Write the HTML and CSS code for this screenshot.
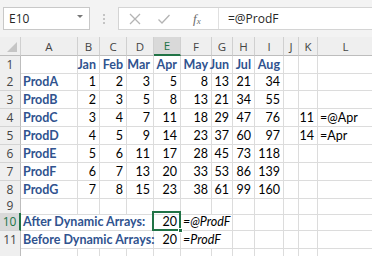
FILE: index.html
```html
<!DOCTYPE html>
<html>
<head>
    <meta charset="UTF-8">
    <title>Dynamic Arrays</title>
    <link rel="stylesheet" href="styles.css">
</head>
<body>
    <div class="toolbar">
        <div class="namebox">
            <span>E10</span>
            <span class="caret"></span>
        </div>
        <div class="grip"><i></i><i></i><i></i></div>
        <div class="formula">
            <div class="btns">
                <svg class="icon" width="14" height="14" viewBox="0 0 14 14"><path d="M2 2 L12 12 M12 2 L2 12" stroke="#b4b4b4" stroke-width="1.3" fill="none"/></svg>
                <svg class="icon" width="14" height="14" viewBox="0 0 14 14"><path d="M1.5 7.5 L5 11 L12.5 3" stroke="#b4b4b4" stroke-width="1.3" fill="none"/></svg>
                <span class="fx">f<sub>x</sub></span>
            </div>
            <div class="input">=@ProdF</div>
        </div>
    </div>

    <div class="sheet">
        <div class="row head">
            <div class="corner"><span></span></div>
            <div class="ch">A</div><div class="ch">B</div><div class="ch">C</div><div class="ch">D</div>
            <div class="ch sel">E</div><div class="ch">F</div><div class="ch">G</div><div class="ch">H</div>
            <div class="ch">I</div><div class="ch">J</div><div class="ch">K</div><div class="ch">L</div>
        </div>

        <div class="row h17">
            <div class="rh">1</div><div class="c"></div>
            <div class="c b r">Jan</div><div class="c b r">Feb</div><div class="c b r">Mar</div><div class="c b r">Apr</div>
            <div class="c b r">May</div><div class="c b r">Jun</div><div class="c b r">Jul</div><div class="c b r">Aug</div>
            <div class="c"></div><div class="c"></div><div class="c"></div>
        </div>
        <div class="row">
            <div class="rh">2</div><div class="c b">ProdA</div>
            <div class="c r">1</div><div class="c r">2</div><div class="c r">3</div><div class="c r">5</div>
            <div class="c r">8</div><div class="c r">13</div><div class="c r">21</div><div class="c r">34</div>
            <div class="c"></div><div class="c"></div><div class="c"></div>
        </div>
        <div class="row">
            <div class="rh">3</div><div class="c b">ProdB</div>
            <div class="c r">2</div><div class="c r">3</div><div class="c r">5</div><div class="c r">8</div>
            <div class="c r">13</div><div class="c r">21</div><div class="c r">34</div><div class="c r">55</div>
            <div class="c"></div><div class="c"></div><div class="c"></div>
        </div>
        <div class="row">
            <div class="rh">4</div><div class="c b">ProdC</div>
            <div class="c r">3</div><div class="c r">4</div><div class="c r">7</div><div class="c r">11</div>
            <div class="c r">18</div><div class="c r">29</div><div class="c r">47</div><div class="c r">76</div>
            <div class="c"></div><div class="c r">11</div><div class="c">=@Apr</div>
        </div>
        <div class="row">
            <div class="rh">5</div><div class="c b">ProdD</div>
            <div class="c r">4</div><div class="c r">5</div><div class="c r">9</div><div class="c r">14</div>
            <div class="c r">23</div><div class="c r">37</div><div class="c r">60</div><div class="c r">97</div>
            <div class="c"></div><div class="c r">14</div><div class="c">=Apr</div>
        </div>
        <div class="row">
            <div class="rh">6</div><div class="c b">ProdE</div>
            <div class="c r">5</div><div class="c r">6</div><div class="c r">11</div><div class="c r">17</div>
            <div class="c r">28</div><div class="c r">45</div><div class="c r">73</div><div class="c r">118</div>
            <div class="c"></div><div class="c"></div><div class="c"></div>
        </div>
        <div class="row">
            <div class="rh">7</div><div class="c b">ProdF</div>
            <div class="c r">6</div><div class="c r">7</div><div class="c r">13</div><div class="c r">20</div>
            <div class="c r">33</div><div class="c r">53</div><div class="c r">86</div><div class="c r">139</div>
            <div class="c"></div><div class="c"></div><div class="c"></div>
        </div>
        <div class="row h16">
            <div class="rh">8</div><div class="c b">ProdG</div>
            <div class="c r">7</div><div class="c r">8</div><div class="c r">15</div><div class="c r">23</div>
            <div class="c r">38</div><div class="c r">61</div><div class="c r">99</div><div class="c r">160</div>
            <div class="c"></div><div class="c"></div><div class="c"></div>
        </div>
        <div class="row h16">
            <div class="rh">9</div><div class="c"></div>
            <div class="c"></div><div class="c"></div><div class="c"></div><div class="c"></div>
            <div class="c"></div><div class="c"></div><div class="c"></div><div class="c"></div>
            <div class="c"></div><div class="c"></div><div class="c"></div>
        </div>
        <div class="row">
            <div class="rh active">10</div><div class="c b span4">After Dynamic Arrays:</div>
            <div class="c r current">20<span class="handle"></span></div>
            <div class="c it span2">=@ProdF</div>
            <div class="c"></div><div class="c"></div>
            <div class="c"></div><div class="c"></div><div class="c"></div>
        </div>
        <div class="row h17">
            <div class="rh">11</div><div class="c b span4">Before Dynamic Arrays:</div>
            <div class="c r">20</div>
            <div class="c it span2">=ProdF</div>
            <div class="c"></div><div class="c"></div>
            <div class="c"></div><div class="c"></div><div class="c"></div>
        </div>
        <div class="row">
            <div class="rh"></div><div class="c"></div>
            <div class="c"></div><div class="c"></div><div class="c"></div><div class="c"></div>
            <div class="c"></div><div class="c"></div><div class="c"></div><div class="c"></div>
            <div class="c"></div><div class="c"></div><div class="c"></div>
        </div>
    </div>
</body>
</html>
```

FILE: styles.css
```css
* {
    box-sizing: border-box;
    margin: 0;
    padding: 0;
}

body {
    width: 372px;
    height: 256px;
    overflow: hidden;
    background: #ffffff;
    font-family: Lato, "Liberation Sans", sans-serif;
}

/* formula bar */
.toolbar {
    height: 37px;
    background: #f3f3f3;
    display: flex;
    align-items: flex-start;
    padding: 7px 0 0 3px;
}

.namebox {
    width: 87px;
    height: 23px;
    background: #ffffff;
    border: 1px solid #c8c8c8;
    display: flex;
    align-items: center;
    justify-content: space-between;
    padding: 0 6px 0 5px;
    font-family: "Open Sans", sans-serif;
    font-size: 12px;
    color: #262626;
}

.caret {
    width: 0;
    height: 0;
    border-left: 3px solid transparent;
    border-right: 3px solid transparent;
    border-top: 3px solid #777;
    margin-top: -4px;
}

.grip {
    width: 28px;
    height: 23px;
    display: flex;
    flex-direction: column;
    align-items: center;
    justify-content: center;
    gap: 2px;
}

.grip i {
    width: 2px;
    height: 2px;
    background: #c4c4c4;
}

.formula {
    flex: 1;
    height: 23px;
    background: #ffffff;
    border: 1px solid #d4d4d4;
    border-right: none;
    display: flex;
    align-items: center;
}

.btns {
    width: 100px;
    height: 100%;
    display: flex;
    align-items: center;
    padding-left: 9px;
    gap: 15px;
    border-right: 1px solid #e0e0e0;
}

.fx {
    font-family: "Liberation Serif", serif;
    font-style: italic;
    font-size: 13px;
    color: #6b6b6b;
    margin-left: 7px;
}

.fx sub {
    font-size: 9px;
    vertical-align: -1px;
}

.input {
    padding-left: 9px;
    font-family: "Open Sans", sans-serif;
    font-size: 12px;
    color: #262626;
}

/* grid */
.row {
    display: grid;
    grid-template-columns: 21px 57px 22px 27px 27px 27px 31px 21px 22px 29px 15px 19px 56px;
    height: 18px;
}

.row.head { height: 19px; }
.row.h17 { height: 17px; }
.row.h16 { height: 16px; }

.corner,
.ch,
.rh {
    background: #efefef;
    color: #444;
    font-family: "Open Sans", sans-serif;
    font-size: 11.5px;
    border-right: 1px solid #d0d0d0;
    border-bottom: 1px solid #bdbdbd;
    display: flex;
    align-items: center;
    justify-content: center;
}

.corner {
    position: relative;
}

.corner span {
    position: absolute;
    right: 3px;
    bottom: 3px;
    width: 0;
    height: 0;
    border-left: 10px solid transparent;
    border-bottom: 10px solid #c5c5c5;
}

.ch.sel {
    background: #d9d9d9;
    border-bottom: 2px solid #217346;
    color: #217346;
}

.rh {
    border-bottom: 1px solid #d4d4d4;
    border-right: 1px solid #bdbdbd;
    font-size: 12px;
}

.rh.active {
    background: #d9d9d9;
    color: #217346;
    border-right: 2px solid #217346;
}

.c {
    border-right: 1px solid #dcdcdc;
    border-bottom: 1px solid #dcdcdc;
    font-size: 12.5px;
    color: #000;
    display: flex;
    align-items: center;
    padding: 0 3px 0 2px;
    white-space: nowrap;
    overflow: visible;
}

.c.r { justify-content: flex-end; }

.c.b {
    font-weight: bold;
    color: #30538f;
}

.c.it { font-style: italic; }

.span4 { grid-column: span 4; }
.span2 { grid-column: span 2; }

.current {
    position: relative;
}

.current::after {
    content: "";
    position: absolute;
    left: -2px;
    top: -2px;
    right: -1px;
    bottom: -1px;
    border: 2px solid #217346;
}

.handle {
    position: absolute;
    right: -3px;
    bottom: -3px;
    width: 5px;
    height: 5px;
    background: #217346;
    border: 1px solid #fff;
    z-index: 1;
}
```
